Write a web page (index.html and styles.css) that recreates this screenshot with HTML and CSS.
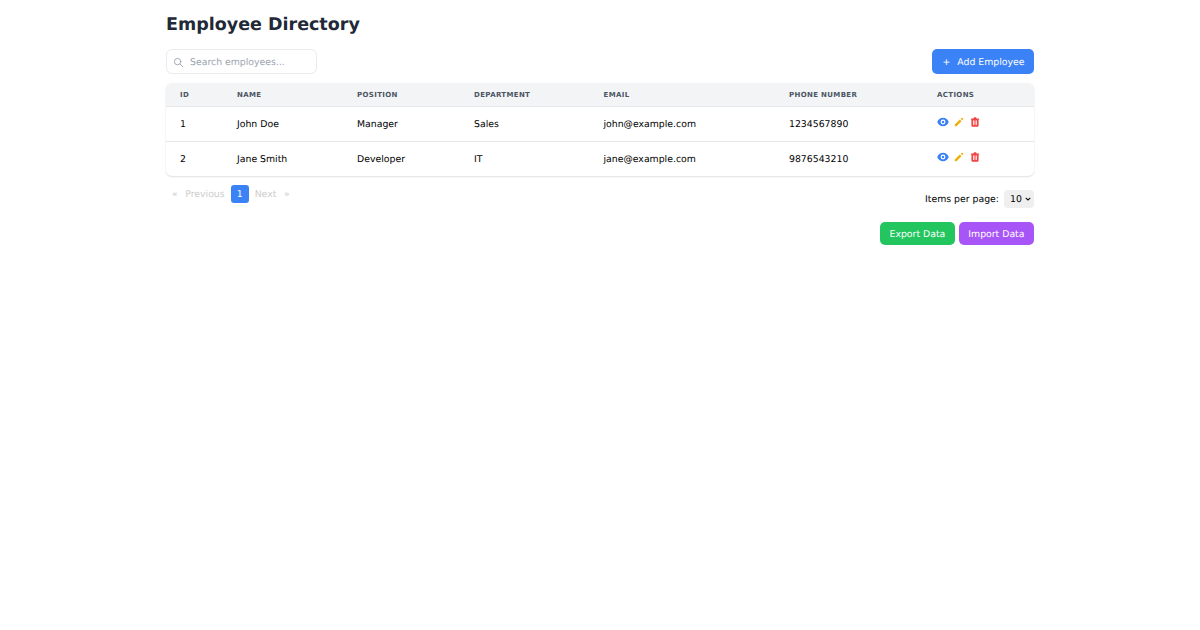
FILE: index.html
```html
<!DOCTYPE html>
<html lang="en">
<head>
<meta charset="utf-8">
<title>Employee Directory</title>
<link rel="stylesheet" href="styles.css">
</head>
<body>
<main class="container">
  <h1 class="title">Employee Directory</h1>
  <div class="toolbar">
    <label class="search">
      <svg class="search-icon" viewBox="0 0 24 24" fill="none" stroke="currentColor" stroke-width="2" stroke-linecap="round"><circle cx="10" cy="10" r="7"/><path d="M15.5 15.5 21 21"/></svg>
      <input class="search-input" type="text" placeholder="Search employees...">
    </label>
    <button class="btn btn-add"><span class="plus">+</span>Add Employee</button>
  </div>
  <div class="table-card">
    <table class="table">
      <colgroup>
        <col class="c1"><col class="c2"><col class="c3"><col class="c4"><col class="c5"><col class="c6"><col class="c7">
      </colgroup>
      <thead>
        <tr><th>ID</th><th>Name</th><th>Position</th><th>Department</th><th>Email</th><th>Phone Number</th><th>Actions</th></tr>
      </thead>
      <tbody>
        <tr>
          <td>1</td><td>John Doe</td><td>Manager</td><td>Sales</td><td>john@example.com</td><td>1234567890</td>
          <td><div class="actions">
            <svg class="icon eye" viewBox="0 0 20 20" fill="currentColor"><path d="M10 12a2 2 0 1 0 0-4 2 2 0 0 0 0 4z"/><path fill-rule="evenodd" d="M.458 10C1.732 5.943 5.522 3 10 3s8.268 2.943 9.542 7c-1.274 4.057-5.064 7-9.542 7S1.732 14.057.458 10zM14 10a4 4 0 1 1-8 0 4 4 0 0 1 8 0z"/></svg>
            <svg class="icon pencil" viewBox="0 0 20 20" fill="currentColor"><path d="M13.586 3.586a2 2 0 1 1 2.828 2.828l-.793.793-2.828-2.828.793-.793zM11.379 5.793 3 14.172V17h2.828l8.38-8.379-2.83-2.828z"/></svg>
            <svg class="icon trash" viewBox="0 0 20 20" fill="currentColor"><path fill-rule="evenodd" d="M9 2a1 1 0 0 0-.894.553L7.382 4H4a1 1 0 0 0 0 2v10a2 2 0 0 0 2 2h8a2 2 0 0 0 2-2V6a1 1 0 1 0 0-2h-3.382l-.724-1.447A1 1 0 0 0 11 2H9zM7 8a1 1 0 0 1 2 0v6a1 1 0 1 1-2 0V8zm5-1a1 1 0 0 0-1 1v6a1 1 0 1 0 2 0V8a1 1 0 0 0-1-1z"/></svg>
          </div></td>
        </tr>
        <tr>
          <td>2</td><td>Jane Smith</td><td>Developer</td><td>IT</td><td>jane@example.com</td><td>9876543210</td>
          <td><div class="actions">
            <svg class="icon eye" viewBox="0 0 20 20" fill="currentColor"><path d="M10 12a2 2 0 1 0 0-4 2 2 0 0 0 0 4z"/><path fill-rule="evenodd" d="M.458 10C1.732 5.943 5.522 3 10 3s8.268 2.943 9.542 7c-1.274 4.057-5.064 7-9.542 7S1.732 14.057.458 10zM14 10a4 4 0 1 1-8 0 4 4 0 0 1 8 0z"/></svg>
            <svg class="icon pencil" viewBox="0 0 20 20" fill="currentColor"><path d="M13.586 3.586a2 2 0 1 1 2.828 2.828l-.793.793-2.828-2.828.793-.793zM11.379 5.793 3 14.172V17h2.828l8.38-8.379-2.83-2.828z"/></svg>
            <svg class="icon trash" viewBox="0 0 20 20" fill="currentColor"><path fill-rule="evenodd" d="M9 2a1 1 0 0 0-.894.553L7.382 4H4a1 1 0 0 0 0 2v10a2 2 0 0 0 2 2h8a2 2 0 0 0 2-2V6a1 1 0 1 0 0-2h-3.382l-.724-1.447A1 1 0 0 0 11 2H9zM7 8a1 1 0 0 1 2 0v6a1 1 0 1 1-2 0V8zm5-1a1 1 0 0 0-1 1v6a1 1 0 1 0 2 0V8a1 1 0 0 0-1-1z"/></svg>
          </div></td>
        </tr>
      </tbody>
    </table>
  </div>
  <div class="pager-row">
    <nav class="pager">
      <span class="page-edge-first">«</span>
      <span class="page-link">Previous</span>
      <span class="page-current">1</span>
      <span class="page-link">Next</span>
      <span class="page-edge-last">»</span>
    </nav>
    <div class="per-page">
      <span>Items per page:</span>
      <span class="per-wrap">
        <select class="per-select"><option>10</option></select>
        <svg class="per-arrow" viewBox="0 0 8 5" fill="none" stroke="currentColor" stroke-width="1.4"><path d="M1 1l3 3 3-3"/></svg>
      </span>
    </div>
  </div>
  <div class="data-actions">
    <button class="btn btn-export">Export Data</button>
    <button class="btn btn-import">Import Data</button>
  </div>
</main>
</body>
</html>
```
FILE: styles.css
```css
* { box-sizing: border-box; }
html, body { margin: 0; padding: 0; background: #fff; }
body { font-family: "DejaVu Sans", sans-serif; font-size: 9.33px; color: #000; text-rendering: geometricPrecision; }
.container { width: 868px; margin: 0 auto; padding-top: 13px; }
.title { margin: 0; font-size: 17.5px; line-height: 24px; font-weight: 700; color: #1f2937; }
.toolbar { display: flex; justify-content: space-between; align-items: center; margin-top: 12px; }
.search { display: flex; align-items: center; width: 151px; height: 25px; border: 1px solid #e9ebee; border-radius: 6px; padding-left: 6px; color: #9ca3af; }
.search-icon { width: 11px; height: 11px; margin-right: 6px; flex: none; margin-top: 1px; }
.search-input { border: 0; outline: 0; padding: 1px 0 0; width: 120px; font: inherit; color: #374151; background: transparent; text-rendering: geometricPrecision; }
.search-input::placeholder { color: #9ca3af; opacity: 1; }
.btn { border: 0; border-radius: 5px; color: #fff; font: inherit; display: inline-flex; align-items: center; justify-content: center; padding: 1px 9.5px 0; text-rendering: geometricPrecision; }
.btn-add { background: #3b82f6; height: 25px; padding-left: 10.5px; }
.plus { margin-right: 7px; }
.table-card { margin-top: 9px; border-radius: 6px; overflow: hidden; box-shadow: 0 1px 2px rgba(0,0,0,.12), 0 0 1px rgba(0,0,0,.06); }
.table { width: 868px; table-layout: fixed; border-collapse: collapse; }
.c1 { width: 57px; } .c2 { width: 120px; } .c3 { width: 117px; } .c4 { width: 129.5px; } .c5 { width: 185.5px; } .c6 { width: 148px; } .c7 { width: 111px; }
th { height: 23px; padding: 1px 14px 0; background: #f3f4f6; border-bottom: 1px solid #e5e7eb; text-align: left; font-size: 7px; font-weight: 700; letter-spacing: .35px; text-transform: uppercase; color: #4b5563; }
td { height: 35px; padding: 2px 14px 0; border-bottom: 1px solid #e5e7eb; }
tbody tr:last-child td { border-bottom: 0; }
.actions { display: flex; align-items: center; gap: 4px; margin-top: -6px; }
.icon { width: 12px; height: 12px; flex: none; }
.eye { color: #3b82f6; } .pencil { color: #eab308; } .trash { color: #ef4444; }
.pager-row { display: flex; justify-content: space-between; align-items: flex-start; margin-top: 9px; }
.pager { display: flex; align-items: center; height: 18px; color: #ccc; }
.page-link { padding: 0 6px; }
.page-edge-first { padding: 0 1.5px 0 6px; }
.page-edge-last { padding: 0 0 0 1.5px; }
.page-current { width: 18px; height: 18px; border-radius: 3px; background: #3b82f6; color: #fff; display: flex; align-items: center; justify-content: center; }
.per-page { display: flex; align-items: center; gap: 5px; margin-top: 5px; height: 18px; }
.per-wrap { position: relative; display: block; width: 30px; height: 18px; }
.per-select { appearance: none; display: block; height: 18px; width: 30px; border: 0; border-radius: 4px; background: #efefef; font: inherit; color: #000; padding: 0 0 0 6px; text-rendering: geometricPrecision; }
.per-arrow { position: absolute; right: 3px; top: 7px; width: 6px; height: 4px; pointer-events: none; }
.data-actions { display: flex; justify-content: flex-end; gap: 4px; margin-top: 14px; }
.btn-export { background: #22c55e; height: 23px; }
.btn-import { background: #a855f7; height: 23px; }
```
